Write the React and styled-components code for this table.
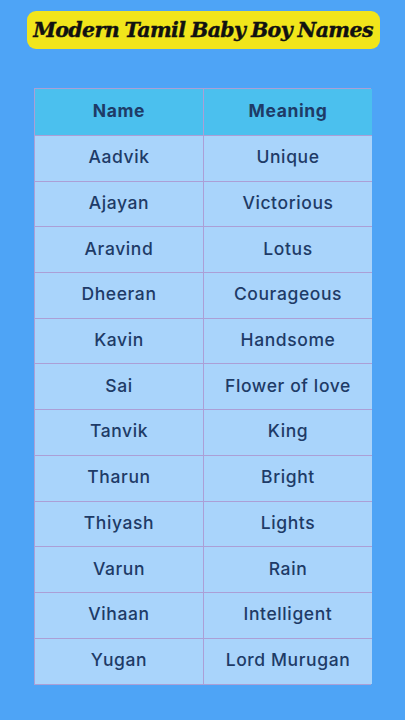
import React from 'react';
import styled, { createGlobalStyle } from 'styled-components';

const GlobalStyle = createGlobalStyle`
  html, body {
    margin: 0;
    padding: 0;
    background: #4ea4f6;
  }
`;

const Page = styled.div`
  width: 405px;
  height: 720px;
  background: #4ea4f6;
  display: flex;
  flex-direction: column;
  align-items: center;
  padding-top: 11px;
  box-sizing: border-box;
  font-family: "Inter", "Lato", sans-serif;
`;

const Title = styled.div`
  width: 353px;
  height: 38px;
  margin-left: 1px;
  background: #f1e51b;
  border-radius: 9px;
  display: flex;
  align-items: center;
  justify-content: center;
  font-family: "DejaVu Serif", "Liberation Serif", serif;
  font-weight: 900;
  font-style: italic;
  font-size: 20.5px;
  letter-spacing: -0.6px;
  word-spacing: -1px;
  color: #111;
  -webkit-text-stroke: 0.4px #111;
`;

const Table = styled.div`
  margin-top: 39px;
  width: 337px;
  display: grid;
  grid-template-columns: 169px 168px;
  border: 1px solid #ab9fd6;
  box-sizing: border-box;
`;

const Cell = styled.div`
  height: ${p => (p.$head ? '47px' : '45.7px')};
  display: flex;
  align-items: center;
  justify-content: center;
  padding-bottom: 3px;
  box-sizing: border-box;
  background: ${p => (p.$head ? '#4bc0ee' : '#a9d4fb')};
  color: #1e3b67;
  font-size: 17.5px;
  font-weight: ${p => (p.$head ? 700 : 500)};
  letter-spacing: 0.6px;
  border-right: ${p => (p.$left ? '1px solid #ab9fd6' : 'none')};
  border-bottom: ${p => (p.$last ? 'none' : '1px solid #ab9fd6')};
`;

const rows = [
  ['Aadvik', 'Unique'],
  ['Ajayan', 'Victorious'],
  ['Aravind', 'Lotus'],
  ['Dheeran', 'Courageous'],
  ['Kavin', 'Handsome'],
  ['Sai', 'Flower of love'],
  ['Tanvik', 'King'],
  ['Tharun', 'Bright'],
  ['Thiyash', 'Lights'],
  ['Varun', 'Rain'],
  ['Vihaan', 'Intelligent'],
  ['Yugan', 'Lord Murugan'],
];

export default function App() {
  return (
    <>
      <GlobalStyle />
      <Page>
        <Title>Modern Tamil Baby Boy Names</Title>
        <Table>
          <Cell $head $left>Name</Cell>
          <Cell $head>Meaning</Cell>
          {rows.map(([name, meaning], i) => (
            <React.Fragment key={name}>
              <Cell $left $last={i === rows.length - 1}>{name}</Cell>
              <Cell $last={i === rows.length - 1}>{meaning}</Cell>
            </React.Fragment>
          ))}
        </Table>
      </Page>
    </>
  );
}
